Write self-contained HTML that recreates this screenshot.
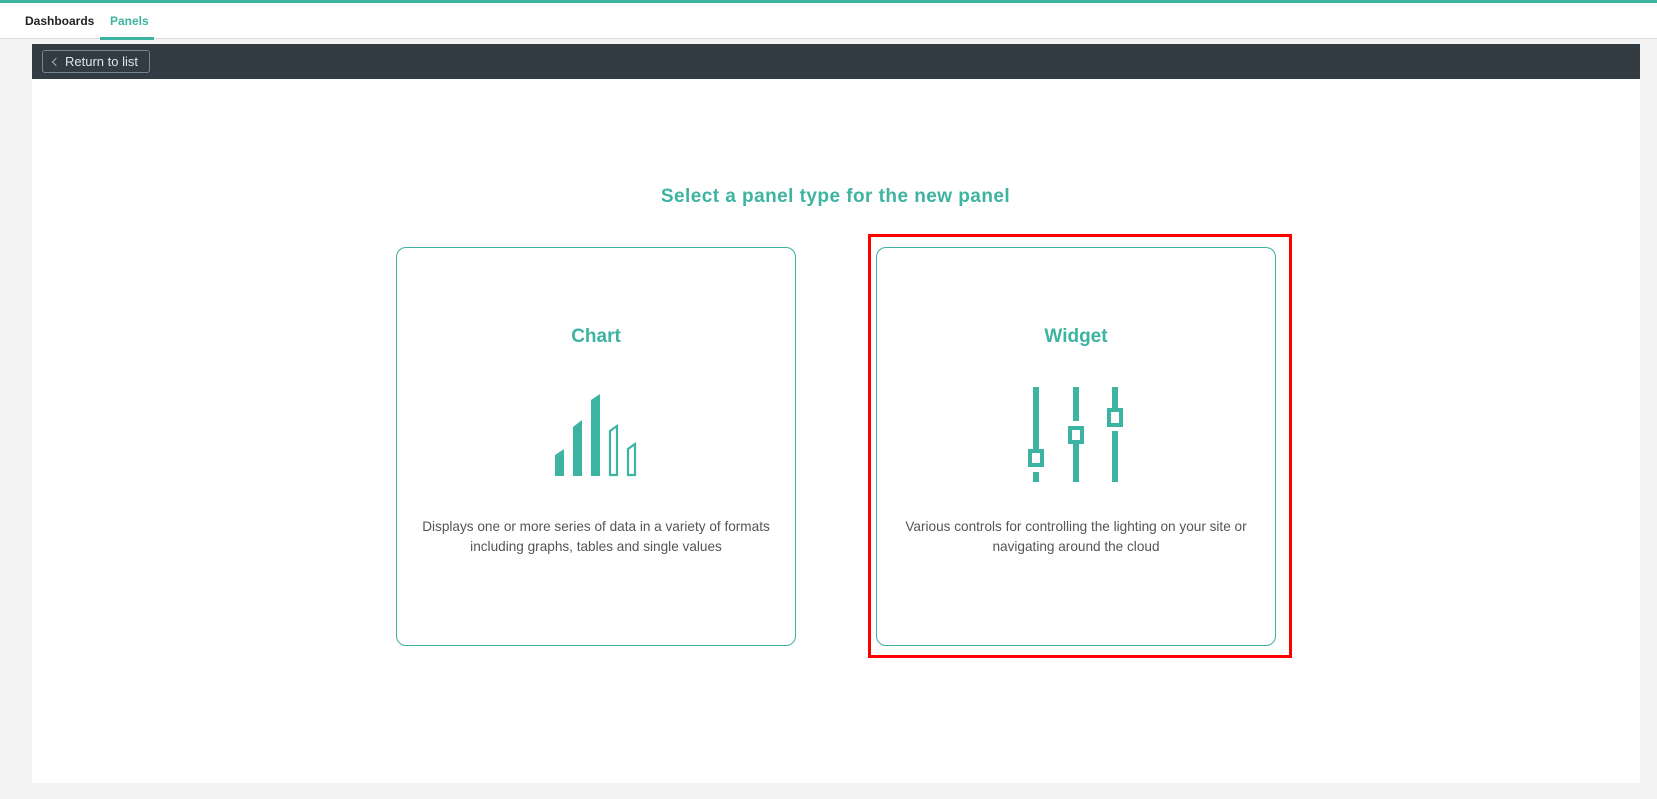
<!DOCTYPE html>
<html><head><meta charset="utf-8"><style>
*{margin:0;padding:0;box-sizing:border-box}
body{width:1657px;height:799px;background:#f3f3f3;font-family:"Liberation Sans",sans-serif;position:relative;overflow:hidden}
.top{position:absolute;left:0;top:0;width:1657px;height:3px;background:#3db3a1}
.nav{position:absolute;left:0;top:3px;width:1657px;height:36px;background:#fff;border-bottom:1px solid #ddd}
.tab{position:absolute;top:11px;font-size:12px;font-weight:bold}
.ul{position:absolute;left:100px;top:34px;width:54px;height:3px;background:#3db3a1}
.dark{position:absolute;left:32px;top:44px;width:1608px;height:35px;background:#323a42}
.btn{position:absolute;left:10px;top:6px;width:108px;height:23px;border:1px solid #7a8490;border-radius:3px;color:#dfe5ea;font-size:13px;line-height:21px;padding-left:22px}
.btn:before{content:"";position:absolute;left:10px;top:8px;width:5px;height:5px;border-left:1px solid #aab;border-bottom:1px solid #aab;transform:rotate(45deg)}
.main{position:absolute;left:32px;top:79px;width:1608px;height:704px;background:#fff}
h1{position:absolute;left:7px;top:186px;width:1657px;text-align:center;font-size:19px;letter-spacing:0.45px;color:#3db3a1;font-weight:bold}
.card{position:absolute;top:247px;width:400px;height:399px;border:1px solid #3db3a1;border-radius:10px;background:#fff}
.card h2{position:absolute;top:78px;width:100%;text-align:center;font-size:19px;color:#3db3a1;font-weight:bold}
.card p{position:absolute;top:269px;width:100%;text-align:center;font-size:13.6px;line-height:20px;color:#555}
.red{position:absolute;left:868px;top:234px;width:424px;height:424px;border:3px solid #f00}
svg{position:absolute;left:0;top:0}
</style></head><body>
<div class="top"></div>
<div class="nav"><span class="tab" style="left:25px;color:#222">Dashboards</span><span class="tab" style="left:110px;color:#3db3a1">Panels</span><div class="ul"></div></div>
<div class="dark"><div class="btn">Return to list</div></div>
<div class="main"></div>
<h1>Select a panel type for the new panel</h1>
<div class="card" style="left:396px"><h2>Chart</h2><p>Displays one or more series of data in a variety of formats<br>including graphs, tables and single values</p></div>
<div class="red"></div>
<div class="card" style="left:876px"><h2>Widget</h2><p>Various controls for controlling the lighting on your site or<br>navigating around the cloud</p></div>
<svg width="1657" height="799" fill="#3db3a1">
<polygon points="555,455 564,449 564,476 555,476"/>
<polygon points="573,427 582,420 582,476 573,476"/>
<polygon points="591,400 600,394 600,476 591,476"/>
<polygon points="610,431 617,426 617,475 610,475" fill="none" stroke="#3db3a1" stroke-width="2.2"/>
<polygon points="628,449 635,444 635,475 628,475" fill="none" stroke="#3db3a1" stroke-width="2.2"/>
<rect x="1033" y="387" width="6" height="63"/><rect x="1033" y="472" width="6" height="10"/>
<rect x="1030" y="451" width="12" height="14" fill="none" stroke="#3db3a1" stroke-width="4"/>
<rect x="1073" y="387" width="6" height="34"/><rect x="1073" y="444" width="6" height="38"/>
<rect x="1070" y="428" width="12" height="14" fill="none" stroke="#3db3a1" stroke-width="4"/>
<rect x="1112" y="387" width="6" height="22"/><rect x="1112" y="431" width="6" height="51"/>
<rect x="1109" y="410" width="12" height="15" fill="none" stroke="#3db3a1" stroke-width="4"/>
</svg>
</body></html>
